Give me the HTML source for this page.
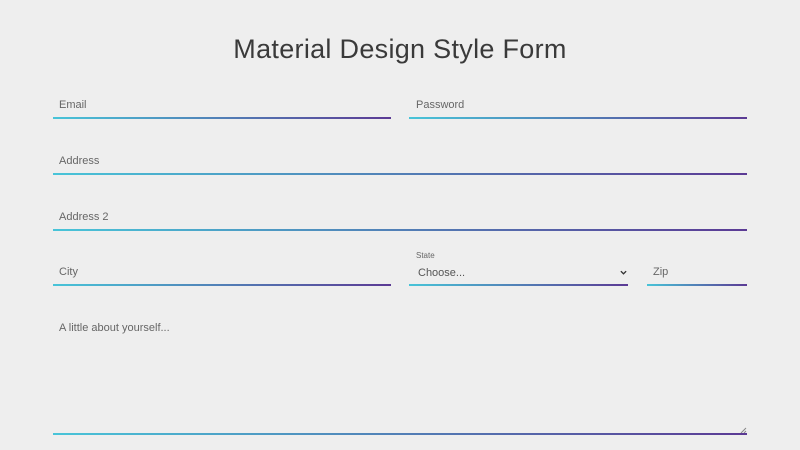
<!DOCTYPE html>
<html><head><meta charset="utf-8"><style>
html,body{margin:0;padding:0;background:#eeeeee;width:800px;height:450px;overflow:hidden;font-family:"Liberation Sans",sans-serif;}
h1{position:absolute;top:34px;left:0;width:800px;text-align:center;margin:0;font-weight:normal;font-size:27px;color:#3a3a3a;letter-spacing:0.3px;}
.f{position:absolute;height:1.6px;background:linear-gradient(to right,#48c4d8,#5b3a94);}
.l{position:absolute;font-size:11px;color:#666;}
</style></head><body>
<h1>Material Design Style Form</h1>
<div class="l" style="left:59px;top:99px">Email</div>
<div class="f" style="left:53px;top:117px;width:338px"></div>
<div class="l" style="left:416px;top:99px">Password</div>
<div class="f" style="left:409px;top:117px;width:338px"></div>
<div class="l" style="left:59px;top:155px">Address</div>
<div class="f" style="left:53px;top:173px;width:694px"></div>
<div class="l" style="left:59px;top:211px">Address 2</div>
<div class="f" style="left:53px;top:229px;width:694px"></div>
<div class="l" style="left:59px;top:266px">City</div>
<div class="f" style="left:53px;top:284px;width:338px"></div>
<div class="l" style="left:416px;top:251px;font-size:8px">State</div>
<div class="l" style="left:418px;top:267px;color:#555">Choose...</div>
<svg style="position:absolute;left:620px;top:269px" width="7" height="7" viewBox="0 0 8 8"><path d="M1 2.5L4 5.5L7 2.5" stroke="#333" stroke-width="1.6" fill="none"/></svg>
<div class="f" style="left:409px;top:284px;width:219px"></div>
<div class="l" style="left:653px;top:266px">Zip</div>
<div class="f" style="left:647px;top:284px;width:100px"></div>
<div class="l" style="left:59px;top:322px">A little about yourself...</div>
<svg style="position:absolute;left:740px;top:427px" width="7" height="7" viewBox="0 0 7 7"><path d="M1 6L6 1M4 6L6 4" stroke="#888" stroke-width="1"/></svg>
<div class="f" style="left:53px;top:433px;width:694px"></div>
</body></html>
